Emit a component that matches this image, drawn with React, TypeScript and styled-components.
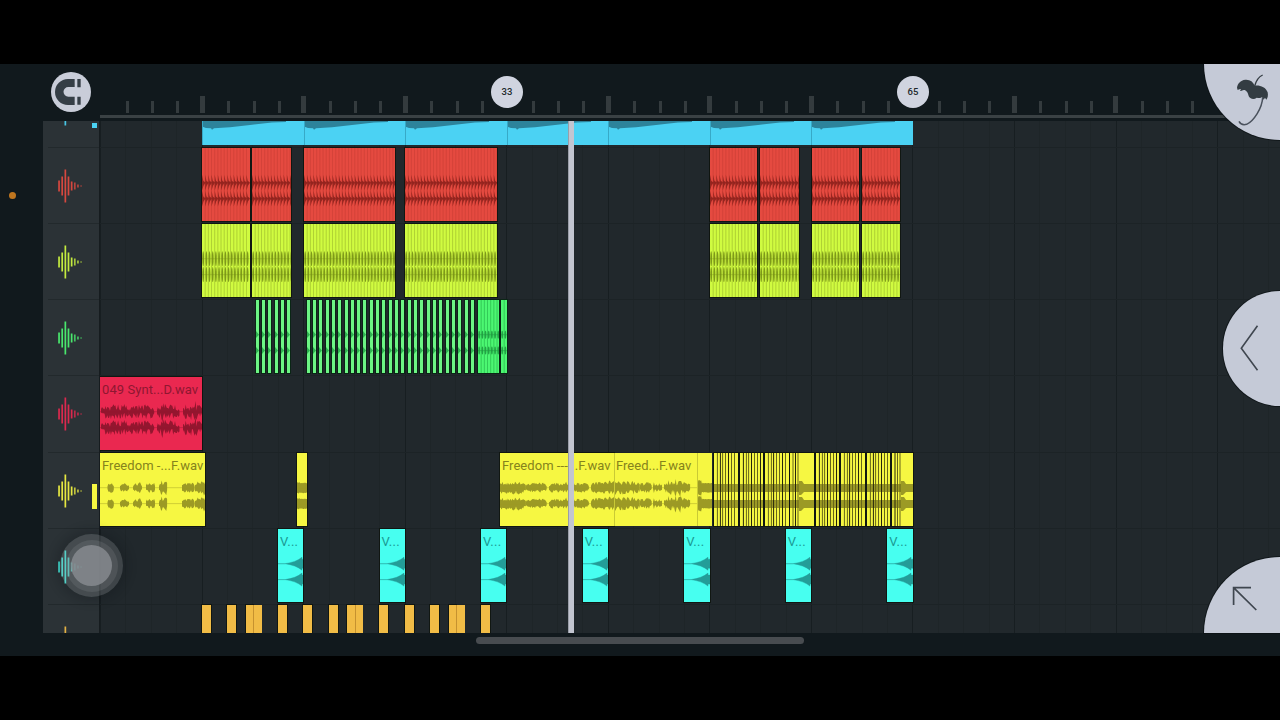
import React from "react";
import styled, { createGlobalStyle } from "styled-components";

const BEAT = 25.39;
const BAR = BEAT * 4;
const GRID_LEFT = 100;

const Global = createGlobalStyle`
  * { box-sizing: border-box; }
  body { margin: 0; background: #000; overflow: hidden; }
`;

const Screen = styled.div`
  width: 1280px;
  height: 720px;
  padding: 64px 0;
  background: #000;
  font-family: Roboto, "Liberation Sans", sans-serif;
`;
const Studio = styled.main`
  position: relative;
  height: 592px;
  display: flex;
  flex-direction: column;
  background: #11191d;
  overflow: hidden;
`;
const TopBar = styled.header`
  display: flex;
  height: 57px;
  flex: none;
`;
const ToolSlot = styled.div`
  width: 100px;
  padding: 8px 0 0 51px;
`;
const SnapButton = styled.div`
  width: 40px;
  height: 40px;
  border-radius: 50%;
  background: #c9cdd9;
  svg { display: block; }
`;
const Ruler = styled.div`
  position: relative;
  flex: 1;
  height: 54px;
  border-bottom: 3px solid #3a4144;
  display: flex;
  align-items: flex-end;
  padding-bottom: 2px;
`;
const Tick = styled.i<{ $major: boolean; $hidden: boolean }>`
  flex: none;
  width: ${BEAT}px;
  height: ${(p) => (p.$major ? 17 : 12)}px;
  visibility: ${(p) => (p.$hidden ? "hidden" : "visible")};
  &::before {
    content: "";
    display: block;
    height: 100%;
    width: ${(p) => (p.$major ? 5 : 3)}px;
    margin-left: ${(p) => (p.$major ? -2 : 0.3)}px;
    background: #343b3e;
  }
`;
const BarMarker = styled.div<{ $x: number }>`
  position: absolute;
  top: 12px;
  left: ${(p) => p.$x - GRID_LEFT - 16}px;
  width: 32px;
  height: 32px;
  border-radius: 50%;
  background: #d0d4e0;
  color: #20282c;
  font-size: 9.5px;
  font-weight: 500;
  line-height: 32px;
  text-align: center;
`;
const Workspace = styled.section`
  position: relative;
  display: flex;
  height: 512px;
  flex: none;
`;
const Margin = styled.div`
  width: 43px;
  padding: 71px 0 0 9px;
`;
const Dot = styled.div`
  width: 7px;
  height: 7px;
  border-radius: 50%;
  background: #c0761f;
`;
const TrackList = styled.aside`
  width: 57px;
  overflow: hidden;
  background: #2b3236;
  border-right: 1px solid #161c1f;
`;
const Stack = styled.div`
  margin-top: -50.6px;
`;
const TrackHead = styled.div`
  display: flex;
  align-items: center;
  justify-content: space-between;
  height: 76.25px;
  padding: 1.6px 2px 0 15px;
  background: linear-gradient(#22292c, #22292c) 5px 0 / 100% 1px no-repeat;
`;
const Meter = styled.div<{ $h: number; $color: string; $drop: number }>`
  width: 5.5px;
  height: ${(p) => p.$h}px;
  margin-top: ${(p) => p.$drop}px;
  background: ${(p) => p.$color};
`;
const Playlist = styled.div`
  flex: 1;
  overflow: hidden;
  background-color: #21282c;
  background-image:
    repeating-linear-gradient(90deg, #171e21 0 1px, transparent 1px ${BAR}px),
    repeating-linear-gradient(90deg, #1e2528 0 1px, transparent 1px ${BEAT}px);
`;
const Lane = styled.div`
  display: flex;
  align-items: flex-start;
  height: 76.25px;
  padding-top: 1.2px;
  background: linear-gradient(#1c2326, #1c2326) 0 0 / 100% 1px no-repeat;
`;
const ClipBox = styled.div<{ $gap: number; $w: number; $bg: string; $ink: string; $edge: string }>`
  flex: none;
  position: relative;
  overflow: hidden;
  width: ${(p) => p.$w}px;
  height: 73px;
  margin-left: ${(p) => p.$gap}px;
  background: ${(p) => p.$bg};
  color: ${(p) => p.$ink};
  box-shadow: ${(p) => (p.$gap > 0 && p.$gap < 1 ? "none" : p.$edge)};
  svg { display: block; }
`;
const ClipName = styled.span<{ $spacing: number }>`
  position: absolute;
  top: 5px;
  left: 2px;
  font-size: 13px;
  line-height: 16px;
  letter-spacing: ${(p) => p.$spacing}px;
  white-space: nowrap;
`;
const Playhead = styled.div`
  position: absolute;
  left: 568px;
  top: 0;
  width: 6px;
  height: 512px;
  background: #c2c5d0;
  border-left: 1px solid #9a9ea8;
`;
const TouchRing = styled.div`
  position: absolute;
  left: 60px;
  top: 413px;
  width: 63px;
  height: 63px;
  border-radius: 50%;
  display: grid;
  place-items: center;
  background: rgba(130, 135, 140, 0.3);
  box-shadow: 0 0 10px 5px rgba(15, 19, 21, 0.22);
`;
const TouchMid = styled.div`
  width: 52px;
  height: 52px;
  border-radius: 50%;
  display: grid;
  place-items: center;
  background: rgba(130, 135, 140, 0.24);
`;
const TouchCore = styled.div`
  width: 41px;
  height: 41px;
  border-radius: 50%;
  background: rgba(134, 137, 142, 0.85);
`;
const Footer = styled.footer`
  padding: 4px 0 0 476px;
`;
const ScrollThumb = styled.div`
  width: 328px;
  height: 7px;
  border-radius: 4px;
  background: #484c50;
`;
const EdgeButton = styled.div<{ $top: number; $w: number; $h: number; $radius: string }>`
  position: absolute;
  right: 0;
  top: ${(p) => p.$top}px;
  width: ${(p) => p.$w}px;
  height: ${(p) => p.$h}px;
  border-radius: ${(p) => p.$radius};
  background: #c5cad7;
  box-shadow: 0 0 0 1px rgba(12, 17, 20, 0.7);
  svg { display: block; }
`;

type Blob = [number, number, number];

/* Deterministic noise in 0..1, so that a waveform is the same at each render. */
const noise = (n: number) => {
  const v = Math.sin(n * 12.9898) * 43758.5453;
  return v - Math.floor(v);
};

const wavePath = (blobs: Blob[], cy: number, rough: number) =>
  blobs
    .map(([a, b, amp]) => {
      const up: string[] = [];
      const down: string[] = [];
      for (let x = a; x <= b; x += 0.9) {
        const t = (x - a) / (b - a);
        const edge = Math.min(1, 0.5 + Math.sin(Math.PI * t) * 1.1);
        const spike = noise(x * 3.1) > 0.86 ? 1 + rough * 0.5 : 1;
        const h = amp * edge * spike * (1 - rough * noise(x + 3));
        const h2 = amp * edge * spike * (1 - rough * noise(x * 1.7 + 5));
        up.push(`${x.toFixed(1)} ${(cy - h).toFixed(2)}`);
        down.unshift(`${x.toFixed(1)} ${(cy + h2).toFixed(2)}`);
      }
      return `M${up.join("L")}L${down.join("L")}Z`;
    })
    .join("");

const Wave = ({ w, blobs, color, rough = 0.55, line = true }: { w: number; blobs: Blob[]; color: string; rough?: number; line?: boolean }) => (
  <svg width={w} height="73">
    <path d={wavePath(blobs, 34.7, rough) + wavePath(blobs, 50.6, rough)} fill={color} />
    {line && <path d={`M0 34.7H${w}M0 50.6H${w}`} stroke={color} strokeWidth="0.6" opacity="0.7" />}
  </svg>
);

const STEP = BAR / 32;

const DrumWave = ({ w, kind }: { w: number; kind: "kick" | "hat" | "clap" }) => {
  const count = Math.ceil(w / STEP);
  const ink = { kick: "#8f221d", hat: "#748f15", clap: "#1f9a40" }[kind];
  const rule = { kick: "#bb3830", hat: "#9fbe2e", clap: "#27b64b" }[kind];
  const hits = Array.from({ length: count }, (_, i) => i * STEP);
  return (
    <svg width={w} height="73">
      {hits.map((x, i) => (
        <g key={i}>
          {i > 0 && <path d={`M${x} 0V73`} stroke={rule} strokeWidth="0.8" opacity={kind === "kick" ? 0.5 : 0.85} />}
          {[34.7, 50.6].map((cy) =>
            kind === "kick" ? (
              <path key={cy} d={`M${x} ${cy - 8}L${x + 1.3} ${cy - 2}L${x + 3.2} ${cy - 0.5}V${cy + 0.5}L${x + 1.5} ${cy + 3}L${x} ${cy + 8}Z`} fill={ink} opacity="0.9" />
            ) : (
              <ellipse key={cy} cx={x + 1.2} cy={cy} rx={kind === "hat" ? 0.9 : 0.9} ry={kind === "hat" ? 7.5 : 4} fill={ink} opacity="0.9" />
            )
          )}
        </g>
      ))}
      <path d={`M0 34.7H${w}M0 50.6H${w}`} stroke={ink} strokeWidth="1" opacity={kind === "hat" ? 0.3 : 0.5} />
    </svg>
  );
};

const HornWave = () => (
  <svg width="26" height="73">
    {[34.7, 50.6].map((cy) => (
      <path key={cy} d={`M0 ${cy}H7C14 ${cy - 1} 20 ${cy - 3} 24 ${cy - 6.5}V${cy - 4.5}H26V${cy + 4.5}H24V${cy + 6.5}C20 ${cy + 3} 14 ${cy + 1} 7 ${cy}Z`} fill="#239d98" stroke="#239d98" strokeWidth="0.4" />
    ))}
  </svg>
);

const SwellWave = () => (
  <svg width={BAR + 1} height="73">
    <path d="M0 49H84V50L70 50.5L48 53L28 55.3L12 56.3L10 57.7L9 56.3L4 56L0 54.5Z" fill="#2d839b" />
    <path d="M0.5 49V73" stroke="#37a9c7" strokeWidth="1" />
  </svg>
);

const CutWave = ({ w, index }: { w: number; index: number }) => {
  const held = index === 3 || index === 7;
  const lines = held ? [3, 5.5, 8] : [3.4, 6.4, 8.6, 11.5, 14.5, 17.5, 20.5];
  return (
    <svg width={w} height="73">
      <path d={`M0 31H${w}V39H0ZM0 47H${w}V55H0Z`} fill="#9c9a25" />
      {held && <path d="M9 28L12 28L14 31V39L11 42H9ZM9 44L12 44L14 47V55L11 58H9Z" fill="#9c9a25" />}
      {lines.map((x, i) => (
        <path key={x} d={`M${x} 0V73`} stroke={(i + index) % 3 === 1 ? "#26250c" : "#66651a"} strokeWidth="1" />
      ))}
    </svg>
  );
};

type ClipData = { from: number; to: number; name?: string; spacing?: number; art?: React.ReactNode; bg?: string; seam?: string };
type Track = { color: string; ink: string; meter?: [number, number]; edge?: string; clips: ClipData[] };

const drum = (kind: "kick" | "hat"): ClipData[] =>
  ([
    [202, 249.6], [252.4, 290.6], [303.6, 395.5], [405, 497.2],
    [709.6, 757.4], [760.4, 798.7], [811.6, 859], [862, 900.4],
  ] as const).map(([from, to]) => ({ from, to, art: <DrumWave w={to - from} kind={kind} /> }));

const Sliver = () => (
  <svg width="3" height="73">
    <path d="M0 31L3 34.7L0 38ZM0 47L3 50.6L0 54Z" fill="#1b9a40" opacity="0.75" />
  </svg>
);

const slivers = (start: number, n: number): ClipData[] =>
  Array.from({ length: n }, (_, i) => ({ from: start + i * 6.34, to: start + i * 6.34 + 3, art: <Sliver />, bg: "#6cf584" }));

/* A thin line at the start of a clip that touches the one before it. */
const Seam = styled.i<{ $color: string }>`
  position: absolute;
  inset: 0 auto 0 0;
  width: 1px;
  background: ${(p) => p.$color};
`;

const OLIVE = "#9c9a25";
const CUTS = [[714, 738], [740, 763], [765, 789], [790, 814], [816, 839], [841, 865], [867, 890], [892, 913]] as const;

const tracks: Track[] = [
  {
    color: "#4bd2f3", ink: "#2a8aa5", meter: [5, 32], edge: "none",
    clips: Array.from({ length: 7 }, (_, i) => ({ from: 202 + i * 101.57, to: 202 + (i + 1) * 101.57, art: <SwellWave /> })),
  },
  { color: "#e54a40", ink: "#9f2a25", clips: drum("kick") },
  { color: "#d0fb40", ink: "#829f1c", clips: drum("hat") },
  {
    color: "#4cf772", ink: "#22a545", edge: "0 0 0 1px #0a2615",
    clips: [
      ...slivers(255.8, 6),
      ...slivers(306.6, 27),
      { from: 478, to: 499.8, art: <DrumWave w={21.8} kind="clap" /> },
      { from: 501.7, to: 507.5, art: <DrumWave w={5.8} kind="clap" /> },
    ],
  },
  {
    color: "#ea2850", ink: "#8f1731",
    clips: [{
      from: 100, to: 202.3, name: "049 Synt...D.wav", spacing: 0.07,
      art: <Wave w={102} color="#94162f" rough={0.9} blobs={[[1, 29, 8], [29, 55, 8], [57, 80, 8], [83, 104, 8.5]]} />,
    }],
  },
  {
    color: "#f6f742", ink: "#85831c", meter: [25, 12],
    clips: [
      {
        from: 100, to: 205, name: "Freedom -...F.wav", spacing: 0.05,
        art: <Wave w={105} color={OLIVE} blobs={[[7.5, 14, 5.5], [20, 29, 4.5], [33, 42, 4.5], [46, 55, 5], [59, 68, 6], [82, 95, 5], [95, 107, 6.5]]} />,
      },
      { from: 297, to: 307, art: <Wave w={10} color={OLIVE} rough={0.2} blobs={[[-2, 12, 5.5]]} /> },
      {
        from: 500, to: 614, name: "Freedom -\u200C-\u200C-...F.wav", spacing: 0.05,
        art: <Wave w={114} color={OLIVE} blobs={[[-2, 26, 6], [26, 47, 5], [49, 69, 5], [70, 89, 5], [91, 118, 6.5]]} />,
      },
      {
        from: 614.01, to: 697, name: "Freed...F.wav", spacing: 0.03, seam: "#c9ca35",
        art: <Wave w={83} color={OLIVE} rough={0.7} blobs={[[-3, 26, 7], [26, 38, 6], [39, 48, 5], [50, 77, 7]]} />,
      },
      {
        from: 697.01, to: 712.2, seam: "#c9ca35",
        art: <Wave w={15} color={OLIVE} rough={0.15} line={false} blobs={[[0.5, 5, 8], [3, 20, 5]]} />,
      },
      ...CUTS.map(([from, to], i) => ({ from, to, art: <CutWave w={to - from} index={i} /> })),
    ],
  },
  {
    color: "#47fff0", ink: "#1b9a93",
    clips: Array.from({ length: 7 }, (_, i) => ({
      from: 278 + i * 101.57, to: 303.4 + i * 101.57, name: "V...", spacing: 0.3, art: <HornWave />,
    })),
  },
  {
    color: "#f1bc46", ink: "#a9802c",
    clips: [
      ...([
        [202, 211], [227.2, 236.2], [246, 253], [253.01, 262], [278, 287.2], [303.4, 312.4], [328.6, 337.8],
        [347.4, 355], [355.01, 363.2], [379.4, 388.5], [405, 414], [430.2, 439.4], [449.2, 456], [456.01, 465], [481, 490.5],
      ] as const).map(([from, to], i) => ({ from, to, seam: [3, 8, 13].includes(i) ? "#c6922f" : undefined })),
    ],
  },
];

const TrackIcon = ({ color }: { color: string }) => (
  <svg width="26" height="36" viewBox="0 0 26 36">
    {[11, 19, 33, 19, 9, 7, 3, 1].map((h, i) => (
      <rect key={i} x={0.2 + i * 3.15} y={18 - h / 2} width="1.7" height={h} fill={color} opacity={i > 4 ? 0.75 : 0.92} />
    ))}
  </svg>
);

const MagnetIcon = () => (
  <svg width="40" height="40" viewBox="154 36 120 120" fill="#353e46">
    <path d="M225 57H205A39 39 0 0 0 205 135H225V110H206A14.5 14.5 0 0 1 206 81H225Z" />
    <path d="M233 57H243V82H233ZM233 110H243V134H233Z" />
  </svg>
);

const PalmIcon = () => (
  <svg width="76" height="76" viewBox="732 12 228 228">
    <path d="M831 83C833 70 841 61 856 59C870 58 879 64 884 77C900 75 917 81 923 97C925 107 923 115 919 119L915 113L911 119L906 111C900 117 895 113 890 113C884 118 877 118 871 114C863 108 867 103 861 96C856 88 850 89 845 92L840 93L843 87L838 88L833 90Z" fill="#333c42" />
    <path d="M884 78C888 63 897 50 908 45" fill="none" stroke="#333c42" strokeWidth="4" />
    <path d="M908 112C907 145 880 185 860 193C849 196 841 192 837 184" fill="none" stroke="#4a515c" strokeWidth="4.5" />
  </svg>
);

const Clips = ({ track }: { track: Track }) => {
  let cursor = GRID_LEFT;
  return (
    <Lane>
      {track.clips.map((c, i) => {
        const gap = c.from - cursor;
        cursor = c.to;
        return (
          <ClipBox
            key={i}
            $gap={gap}
            $w={c.to - c.from}
            $bg={c.bg ?? track.color}
            $ink={track.ink}
            $edge={track.edge ?? "0 0 0 1px rgba(14, 19, 12, 0.8)"}
          >
            {c.art}
            {c.seam && <Seam $color={c.seam} />}
            {c.name && <ClipName $spacing={c.spacing ?? 0}>{c.name}</ClipName>}
          </ClipBox>
        );
      })}
    </Lane>
  );
};

export default function App() {
  return (
    <Screen>
      <Global />
      <Studio>
        <TopBar>
          <ToolSlot>
            <SnapButton><MagnetIcon /></SnapButton>
          </ToolSlot>
          <Ruler>
            {Array.from({ length: 44 }, (_, i) => (
              <Tick key={i} $major={i % 4 === 0} $hidden={i === 0 || i === 16 || i === 32} />
            ))}
            <BarMarker $x={507}>33</BarMarker>
            <BarMarker $x={913}>65</BarMarker>
          </Ruler>
        </TopBar>
        <Workspace>
          <Margin><Dot /></Margin>
          <TrackList>
            <Stack>
              {tracks.map((t, i) => (
                <TrackHead key={i}>
                  <TrackIcon color={t.color} />
                  {t.meter && <Meter $h={t.meter[0]} $drop={t.meter[1]} $color={t.color} />}
                </TrackHead>
              ))}
            </Stack>
          </TrackList>
          <Playlist>
            <Stack>
              {tracks.map((t, i) => <Clips key={i} track={t} />)}
            </Stack>
          </Playlist>
          <Playhead />
          <TouchRing><TouchMid><TouchCore /></TouchMid></TouchRing>
        </Workspace>
        <Footer><ScrollThumb /></Footer>
        <EdgeButton $top={0} $w={76} $h={76} $radius="0 0 0 100%"><PalmIcon /></EdgeButton>
        <EdgeButton $top={227} $w={57.5} $h={115} $radius="58px 0 0 58px">
          <svg width="58" height="115" fill="none" stroke="#3f464f" strokeWidth="1.6">
            <path d="M34.5 34.7L18.3 57.3L34.5 79.3" />
          </svg>
        </EdgeButton>
        <EdgeButton $top={493} $w={76} $h={76} $radius="100% 0 0 0">
          <svg width="76" height="76" fill="none" stroke="#3f464f" strokeWidth="1.7">
            <path d="M29.6 48V30.7H47M29.6 30.7L52.3 53" />
          </svg>
        </EdgeButton>
      </Studio>
    </Screen>
  );
}
